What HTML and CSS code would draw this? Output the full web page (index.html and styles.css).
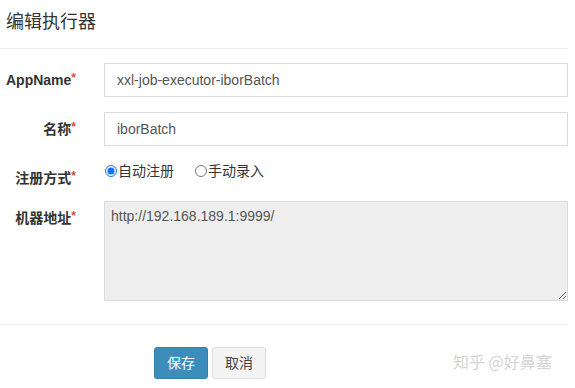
FILE: index.html
```html
<html>
  <head>
    <meta charset="utf-8">
    <title>编辑执行器</title>
    <link rel="stylesheet" href="styles.css">
  </head>
  <body>
    <div class="modal-header">
      <h4 class="modal-title">编辑执行器</h4>
    </div>

    <div class="modal-body">
      <form class="form-horizontal">
        <div class="form-group">
          <label class="control-label">AppName<span class="req">*</span></label>
          <input class="form-control" type="text" value="xxl-job-executor-iborBatch">
        </div>
        <div class="form-group">
          <label class="control-label">名称<span class="req">*</span></label>
          <input class="form-control" type="text" value="iborBatch">
        </div>
        <div class="form-group radio-group">
          <label class="control-label">注册方式<span class="req">*</span></label>
          <div class="radios">
            <label class="radio-inline"><input type="radio" name="addressType" checked>自动注册</label>
            <label class="radio-inline"><input type="radio" name="addressType">手动录入</label>
          </div>
        </div>
        <div class="form-group">
          <label class="control-label">机器地址<span class="req">*</span></label>
          <textarea class="form-control address" readonly>http://192.168.189.1:9999/</textarea>
        </div>
      </form>
    </div>

    <div class="modal-footer">
      <button type="button" class="btn btn-primary">保存</button>
      <button type="button" class="btn btn-default">取消</button>
    </div>

    <div class="watermark">知乎 @好鼻塞</div>
  </body>
</html>
```

FILE: styles.css
```css
body {
  margin: 0;
  width: 568px;
  position: relative;
  height: 388px;
  overflow: hidden;
  background: #fff;
  color: #333;
  font-family: "Liberation Sans", Arial, "Noto Sans CJK SC", sans-serif;
  font-size: 14px;
  line-height: 20px;
}

.modal-header {
  width: 575px;
  padding: 8px 7px 12px 6px;
  box-sizing: border-box;
  height: 49px;
  border-bottom: 1px solid #f0f0f0;
}

.modal-title {
  margin: 0;
  font-size: 18px;
  font-weight: normal;
  line-height: 28px;
  color: #333;
}

.modal-body {
  padding: 14px 0 8px;
}

.form-horizontal .form-group {
  display: grid;
  grid-template-columns: 76px 1fr;
  column-gap: 28px;
  margin-bottom: 15px;
  align-items: start;
}

.control-label {
  padding-top: 7px;
  text-align: right;
  font-weight: bold;
  white-space: nowrap;
}

.req {
  color: #dd4b39;
  font-size: 12px;
  vertical-align: top;
  line-height: 16px;
}

.form-control {
  display: block;
  box-sizing: border-box;
  width: 100%;
  height: 34px;
  margin: 0;
  padding: 6px 12px;
  border: 1px solid #d8dbe0;
  border-radius: 0;
  background: #fff;
  color: #555;
  font-family: inherit;
  font-size: 14px;
  line-height: 20px;
  outline: none;
}

.form-control.address {
  height: 100px;
  padding: 4px 6px;
  background: #eee;
  resize: vertical;
}

.radio-group {
  height: 25px;
}

.radios {
  display: flex;
  gap: 20px;
}

.radio-inline {
  display: flex;
  align-items: center;
  height: 20px;
  color: #333;
}

.radio-inline input {
  width: 12px;
  height: 12px;
  margin: 0 1px 0 1px;
  accent-color: #1a73e8;
}

.modal-footer {
  border-top: 1px solid #f4f4f4;
  padding: 22px 0 0 154px;
  display: flex;
  gap: 4px;
}

.btn {
  height: 32px;
  padding: 5px 12px;
  border-radius: 3px;
  font-family: "Liberation Sans", Arial, "Noto Sans CJK SC", sans-serif;
  font-size: 14px;
  line-height: 20px;
  border: 1px solid transparent;
}

.btn-primary {
  background: #3c8dbc;
  border-color: #367fa9;
  color: #fff;
}

.btn-default {
  background: #f4f4f4;
  border-color: #ddd;
  color: #444;
}

.watermark {
  position: absolute;
  left: 453px;
  top: 350px;
  font-family: "Noto Sans CJK SC", sans-serif;
  font-size: 16px;
  line-height: 22px;
  color: #d4d4d4;
  white-space: nowrap;
}
```
